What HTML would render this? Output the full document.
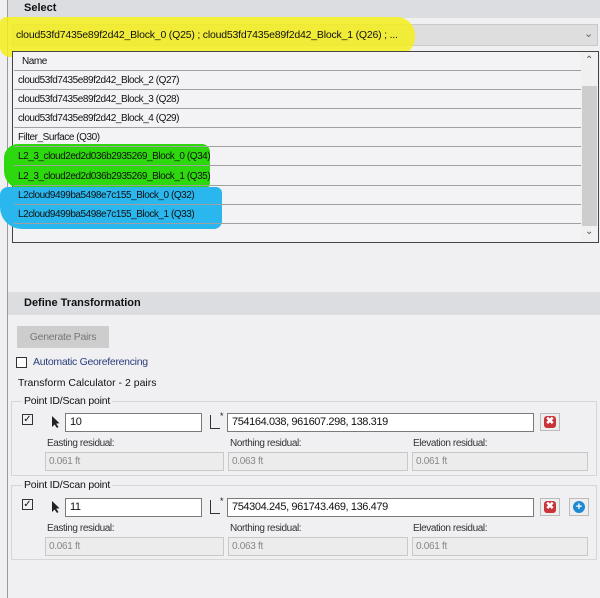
<!DOCTYPE html>
<html><head><style>
*{margin:0;padding:0;box-sizing:border-box}
body{width:600px;height:598px;background:#f0f0f3;font-family:"Liberation Sans",sans-serif;font-size:11px;color:#111;position:relative;overflow:hidden}
.a{position:absolute}
.band{background:#dcdde1;font-weight:bold;font-size:11px;padding-left:16px}
.row{position:absolute;left:14px;width:567px;height:19px;border-bottom:1px solid #a0a0a0;line-height:19px;padding-left:4px;font-size:10px;letter-spacing:-0.45px}
.inp{position:absolute;background:#fff;border:1px solid #7a7a7a;height:19px;line-height:17px;padding-left:4px;font-size:11px;letter-spacing:-0.4px}
.res{position:absolute;background:#ececec;border:1px solid #c8c8c8;height:19px;line-height:17px;padding-left:3px;color:#888;font-size:10px;letter-spacing:-0.3px}
.lbl{position:absolute;font-size:10px;color:#333;letter-spacing:-0.4px}
.grp{position:absolute;left:11px;width:586px;border:1px solid #d6d6d6}
.xb{position:absolute;width:20px;height:18px;border:1px solid #bbb;background:#eee}
.xb i{position:absolute;left:3px;top:2px;width:12px;height:12px;border-radius:3px;background:#c8343a;color:#fff;font-style:normal;font-size:10px;line-height:12px;text-align:center;font-weight:bold}
</style></head><body>
<div class="a" style="left:7px;top:0;width:1px;height:598px;background:#9a9a9a"></div>
<div class="a band" style="left:8px;top:0;width:592px;height:18px;line-height:17px">Select</div>
<div class="a" style="left:12px;top:24px;width:586px;height:22px;background:#dedede;border:1px solid #c9c9c9"></div>
<div class="a" style="left:0;top:17px;width:415px;height:40px;background:rgba(244,238,26,.85);border-radius:6px 18px 20px 10px"></div>
<div class="a" style="left:16px;top:29px;font-size:10.5px;letter-spacing:-0.2px">cloud53fd7435e89f2d42_Block_0 (Q25) ; cloud53fd7435e89f2d42_Block_1 (Q26) ; ...</div>
<div class="a" style="left:584px;top:27px;color:#666;font-size:11px">&#8964;</div>
<div class="a" style="left:12px;top:51px;width:587px;height:192px;border:1px solid #444;background:#f3f3f6"></div>
<div class="a" style="left:581px;top:52px;width:17px;height:190px;background:#f0f0f0"></div>
<div class="a" style="left:582px;top:86px;width:15px;height:140px;background:#cdcdcd"></div>
<div class="a" style="left:585px;top:55px;color:#555;font-size:10px">&#8963;</div>
<div class="a" style="left:585px;top:226px;color:#555;font-size:10px">&#8964;</div>
<div class="a" style="left:4px;top:144px;width:206px;height:45px;background:#2ed80e;border-radius:14px 8px 6px 18px"></div>
<div class="a" style="left:0;top:187px;width:222px;height:42px;background:#2ab7ee;border-radius:8px 6px 8px 22px"></div>
<div class="row" style="top:52px;padding-left:8px">Name</div>
<div class="row" style="top:71px">cloud53fd7435e89f2d42_Block_2 (Q27)</div>
<div class="row" style="top:90px">cloud53fd7435e89f2d42_Block_3 (Q28)</div>
<div class="row" style="top:109px">cloud53fd7435e89f2d42_Block_4 (Q29)</div>
<div class="row" style="top:128px">Filter_Surface (Q30)</div>
<div class="row" style="top:147px">L2_3_cloud2ed2d036b2935269_Block_0 (Q34)</div>
<div class="row" style="top:167px">L2_3_cloud2ed2d036b2935269_Block_1 (Q35)</div>
<div class="row" style="top:186px">L2cloud9499ba5498e7c155_Block_0 (Q32)</div>
<div class="row" style="top:205px">L2cloud9499ba5498e7c155_Block_1 (Q33)</div>

<div class="a band" style="left:8px;top:292px;width:592px;height:23px;line-height:23px">Define Transformation</div>
<div class="a" style="left:17px;top:326px;width:92px;height:22px;background:#cdcdcd;color:#777;text-align:center;line-height:22px;font-size:10.5px;letter-spacing:-0.3px">Generate Pairs</div>
<div class="a" style="left:16px;top:357px;width:11px;height:11px;border:1px solid #333;background:#fff"></div>
<div class="a" style="left:33px;top:356px;color:#2a3d7a;font-size:10.5px;letter-spacing:-0.3px">Automatic Georeferencing</div>
<div class="a" style="left:18px;top:377px;font-size:10.5px">Transform Calculator - 2 pairs</div>

<div class="grp" style="top:401px;height:75px"></div>
<div class="a" style="left:22px;top:395px;background:#f0f0f3;padding:0 2px;font-size:10.5px;letter-spacing:-0.2px">Point ID/Scan point</div>
<div class="a" style="left:22px;top:414px;width:11px;height:11px;border:1px solid #333;font-size:10px;line-height:9px;text-align:center">&#10003;</div>
<svg class="a" style="left:51px;top:415px" width="10" height="14" viewBox="0 0 10 14"><path d="M1 1 L1 12 L3.5 9.5 L6 13 L7.5 12 L5.2 8.6 L8.5 8.3 Z" fill="#222"/></svg>
<div class="inp" style="left:65px;top:413px;width:137px">10</div>
<div class="a" style="left:210px;top:415px;width:10px;height:14px;border-left:1px solid #333;border-bottom:1px solid #333"></div>
<div class="a" style="left:220px;top:411px;font-size:9px">*</div>
<div class="inp" style="left:227px;top:413px;width:307px">754164.038, 961607.298, 138.319</div>
<div class="xb" style="left:540px;top:413px"><i>&#10006;</i></div>
<div class="lbl" style="left:47px;top:438px">Easting residual:</div>
<div class="lbl" style="left:230px;top:438px">Northing residual:</div>
<div class="lbl" style="left:413px;top:438px">Elevation residual:</div>
<div class="res" style="left:45px;top:452px;width:179px">0.061 ft</div>
<div class="res" style="left:228px;top:452px;width:180px">0.063 ft</div>
<div class="res" style="left:412px;top:452px;width:176px">0.061 ft</div>

<div class="grp" style="top:485px;height:75px"></div>
<div class="a" style="left:22px;top:479px;background:#f0f0f3;padding:0 2px;font-size:10.5px;letter-spacing:-0.2px">Point ID/Scan point</div>
<div class="a" style="left:22px;top:499px;width:11px;height:11px;border:1px solid #333;font-size:10px;line-height:9px;text-align:center">&#10003;</div>
<svg class="a" style="left:51px;top:500px" width="10" height="14" viewBox="0 0 10 14"><path d="M1 1 L1 12 L3.5 9.5 L6 13 L7.5 12 L5.2 8.6 L8.5 8.3 Z" fill="#222"/></svg>
<div class="inp" style="left:65px;top:498px;width:137px">11</div>
<div class="a" style="left:210px;top:500px;width:10px;height:14px;border-left:1px solid #333;border-bottom:1px solid #333"></div>
<div class="a" style="left:220px;top:496px;font-size:9px">*</div>
<div class="inp" style="left:227px;top:498px;width:307px">754304.245, 961743.469, 136.479</div>
<div class="xb" style="left:540px;top:498px"><i>&#10006;</i></div>
<div class="xb" style="left:569px;top:498px"><i style="background:#1e88d0;border-radius:6px;font-size:11px">+</i></div>
<div class="lbl" style="left:47px;top:523px">Easting residual:</div>
<div class="lbl" style="left:230px;top:523px">Northing residual:</div>
<div class="lbl" style="left:413px;top:523px">Elevation residual:</div>
<div class="res" style="left:45px;top:537px;width:179px">0.061 ft</div>
<div class="res" style="left:228px;top:537px;width:180px">0.063 ft</div>
<div class="res" style="left:412px;top:537px;width:176px">0.061 ft</div>
</body></html>
